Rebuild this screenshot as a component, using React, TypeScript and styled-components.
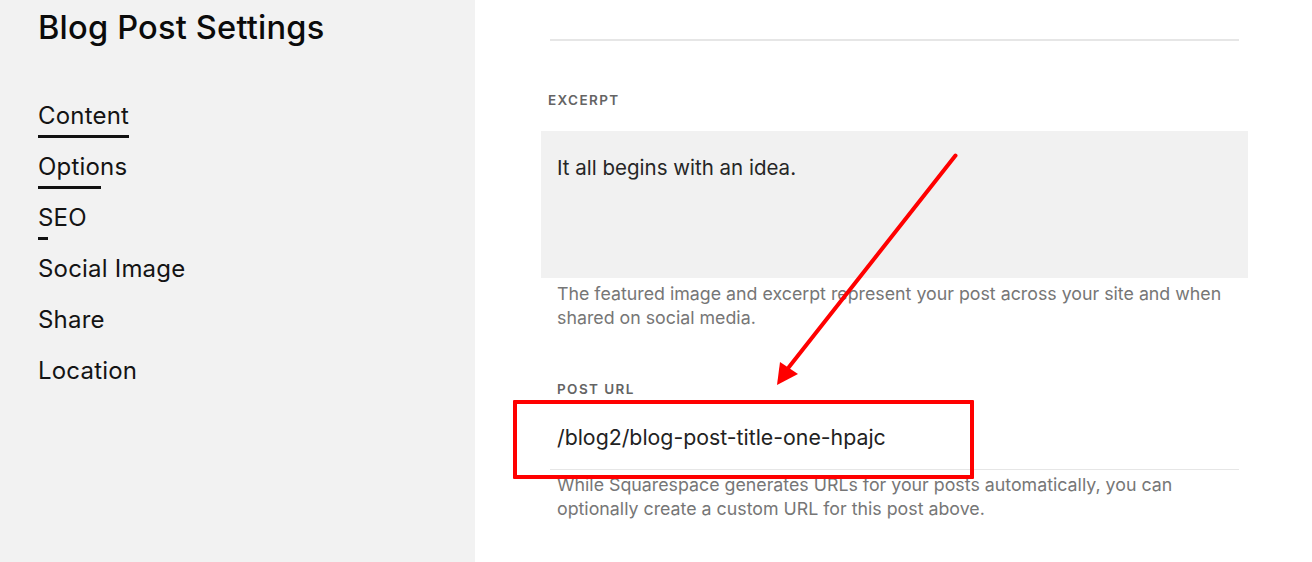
import React from 'react';
import styled, { createGlobalStyle } from 'styled-components';

const GlobalStyle = createGlobalStyle`
  html, body {
    margin: 0;
    padding: 0;
    background: #ffffff;
    font-family: Inter, "Liberation Sans", Arial, sans-serif;
    -webkit-font-smoothing: antialiased;
  }
`;

const StyledPage = styled.div`
  position: relative;
  display: flex;
  flex-direction: row;
  width: 1312px;
  height: 562px;
  overflow: hidden;
`;

const StyledSidebar = styled.aside`
  width: 475px;
  flex-shrink: 0;
  background-color: #f2f2f2;
  padding: 10px 0 0 38px;
  box-sizing: border-box;
`;

const StyledTitle = styled.h1`
  margin: 0;
  font-size: 32.6px;
  line-height: 34px;
  font-weight: 500;
  color: #0b0b0b;
  letter-spacing: 0.2px;
`;

const StyledNav = styled.nav`
  display: flex;
  flex-direction: column;
  align-items: flex-start;
  gap: 15px;
  margin-top: 58px;
`;

const StyledNavItem = styled.div`
  display: inline-flex;
  flex-direction: column;
  font-size: 24px;
  line-height: 28px;
  letter-spacing: 0.2px;
  color: #141414;
`;

const StyledUnderline = styled.span<{ $width: string }>`
  display: block;
  margin-top: 5px;
  height: 3px;
  width: ${(p) => p.$width};
  background-color: #111111;
`;

const StyledMain = styled.main`
  flex: 1;
  padding: 39px 73px 0 75px;
  box-sizing: border-box;
`;

const StyledDivider = styled.div`
  height: 2px;
  background-color: #e6e6e6;
`;

const StyledLabel = styled.div<{ $indent: number; $top: number }>`
  margin: ${(p) => p.$top}px 0 0 ${(p) => p.$indent}px;
  font-size: 13.5px;
  line-height: 16px;
  font-weight: 600;
  letter-spacing: 1.4px;
  color: #646464;
  text-transform: uppercase;
`;

const StyledExcerptBox = styled.div`
  margin: 23px -9px 0 -9px;
  height: 147px;
  box-sizing: border-box;
  padding: 24px 16px 0;
  background-color: #f1f1f1;
  font-size: 20.5px;
  line-height: 26px;
  color: #262626;
`;

const StyledHelp = styled.p<{ $top: number }>`
  margin: ${(p) => p.$top}px 0 0 7px;
  font-size: 17.8px;
  line-height: 24px;
  color: #767676;
`;

const StyledUrlField = styled.div`
  position: relative;
  padding: 27px 0 19px 7px;
  border-bottom: 1px solid #e6e6e6;
  font-size: 21.3px;
  line-height: 26px;
  color: #222222;
`;

const StyledHighlight = styled.div`
  position: absolute;
  left: -37px;
  top: 3px;
  width: 461px;
  height: 79px;
  box-sizing: border-box;
  border: 4.5px solid #ff0000;
  border-radius: 1px;
  pointer-events: none;
`;

const StyledArrow = styled.svg`
  position: absolute;
  top: 0;
  left: 0;
  pointer-events: none;
`;

const navItems = [
  { label: 'Content', underline: '100%' },
  { label: 'Options', underline: '63px' },
  { label: 'SEO', underline: '10px' },
  { label: 'Social Image', underline: '0px' },
  { label: 'Share', underline: '0px' },
  { label: 'Location', underline: '0px' },
];

const App: React.FC = () => {
  return (
    <>
      <GlobalStyle />
      <StyledPage>
        <StyledSidebar>
          <StyledTitle>Blog Post Settings</StyledTitle>
          <StyledNav>
            {navItems.map((item) => (
              <StyledNavItem key={item.label}>
                {item.label}
                <StyledUnderline $width={item.underline} />
              </StyledNavItem>
            ))}
          </StyledNav>
        </StyledSidebar>

        <StyledMain>
          <StyledDivider />
          <StyledLabel $indent={-2} $top={51}>Excerpt</StyledLabel>
          <StyledExcerptBox>It all begins with an idea.</StyledExcerptBox>
          <StyledHelp $top={4}>
            The featured image and excerpt represent your post across your site and when
            shared on social media.
          </StyledHelp>

          <StyledLabel $indent={7} $top={51}>Post URL</StyledLabel>
          <StyledUrlField>
            /blog2/blog-post-title-one-hpajc
            <StyledHighlight />
          </StyledUrlField>
          <StyledHelp $top={3}>
            While Squarespace generates URLs for your posts automatically, you can
            optionally create a custom URL for this post above.
          </StyledHelp>
        </StyledMain>

        <StyledArrow width="1312" height="562" viewBox="0 0 1312 562">
          <line
            x1="955.5"
            y1="155.5"
            x2="789"
            y2="367"
            stroke="#ff0000"
            strokeWidth="4"
            strokeLinecap="round"
          />
          <polygon points="777,385 780,362 798,374" fill="#ff0000" />
        </StyledArrow>
      </StyledPage>
    </>
  );
};

export default App;
